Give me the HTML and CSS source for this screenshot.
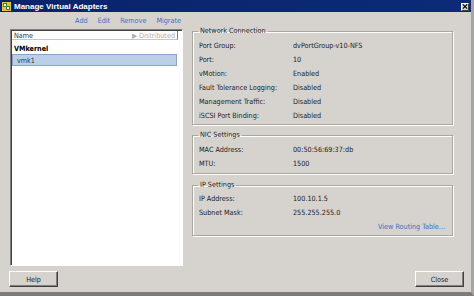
FILE: index.html
```html
<!DOCTYPE html>
<html>
<head>
<meta charset="utf-8">
<link rel="stylesheet" href="styles.css">
</head>
<body>
<div class="window">
  <div class="titlebar">
    <svg class="app-icon" width="9" height="9" viewBox="0 0 9 9">
      <rect x="0" y="0" width="9" height="9" fill="#e8c040"/>
      <rect x="1" y="1" width="4" height="4" fill="#3a8a3a"/>
      <rect x="4" y="4" width="4" height="4" fill="#3a8a3a"/>
      <rect x="2" y="2" width="2" height="2" fill="#fff"/>
      <rect x="5" y="5" width="2" height="2" fill="#fff"/>
    </svg>
    <span class="title">Manage Virtual Adapters</span>
    <span class="close-btn">
      <svg width="7" height="7" viewBox="0 0 7 7"><path d="M1 1 L6 6 M6 1 L1 6" stroke="#000" stroke-width="1.4"/></svg>
    </span>
  </div>
  <div class="main">
    <div class="left">
      <div class="toolbar">
        <a class="link">Add</a>
        <a class="link">Edit</a>
        <a class="link">Remove</a>
        <a class="link">Migrate</a>
      </div>
      <div class="listbox">
        <div class="list-header">
          <span class="col-name">Name</span>
          <span class="col-dist">&#9654; Distributed</span>
        </div>
        <div class="group-row">VMkernel</div>
        <div class="item-row selected">vmk1</div>
      </div>
    </div>
    <div class="right">
      <fieldset class="group g-net">
        <legend>Network Connection</legend>
        <div class="row"><span class="lbl">Port Group:</span><span class="val">dvPortGroup-v10-NFS</span></div>
        <div class="row"><span class="lbl">Port:</span><span class="val">10</span></div>
        <div class="row"><span class="lbl">vMotion:</span><span class="val">Enabled</span></div>
        <div class="row"><span class="lbl">Fault Tolerance Logging:</span><span class="val">Disabled</span></div>
        <div class="row"><span class="lbl">Management Traffic:</span><span class="val">Disabled</span></div>
        <div class="row"><span class="lbl">iSCSI Port Binding:</span><span class="val">Disabled</span></div>
      </fieldset>
      <fieldset class="group g-nic">
        <legend>NIC Settings</legend>
        <div class="row"><span class="lbl">MAC Address:</span><span class="val">00:50:56:69:37:db</span></div>
        <div class="row"><span class="lbl">MTU:</span><span class="val">1500</span></div>
      </fieldset>
      <fieldset class="group g-ip">
        <legend>IP Settings</legend>
        <div class="row"><span class="lbl">IP Address:</span><span class="val">100.10.1.5</span></div>
        <div class="row"><span class="lbl">Subnet Mask:</span><span class="val">255.255.255.0</span></div>
        <div class="row route"><a class="link">View Routing Table...</a></div>
      </fieldset>
    </div>
  </div>
  <div class="buttons">
    <button class="btn">Help</button>
    <button class="btn">Close</button>
  </div>
</div>
</body>
</html>
```

FILE: styles.css
```css
* { box-sizing: border-box; }
html, body {
  margin: 0;
  padding: 0;
  background: #d6d3ce;
}
body {
  font-family: "DejaVu Sans Condensed", "DejaVu Sans", sans-serif;
  font-stretch: condensed;
  font-size: 7.2px;
  color: #222;
}
.window {
  width: 474px;
  height: 296px;
  background: #d6d3ce;
  display: flex;
  flex-direction: column;
  border-right: 3px solid #a8a6a2;
  border-bottom: 4px solid #7c7b78;
  overflow: hidden;
}
.titlebar {
  height: 12px;
  background: linear-gradient(to right, #0a246a, #0c2a78);
  display: flex;
  align-items: center;
  padding: 0 0 0 2px;
  color: #fff;
}
.app-icon { flex: none; }
.title {
  font-family: "Liberation Sans", Arial, sans-serif;
  font-stretch: normal;
  font-weight: bold;
  font-size: 8px;
  margin-left: 3px;
  flex: 1;
}
.close-btn {
  width: 8px;
  height: 8px;
  background: #d6d3ce;
  border: 1px solid;
  border-color: #fff #404040 #404040 #fff;
  display: flex;
  align-items: center;
  justify-content: center;
  margin-right: 2px;
  margin-top: 1px;
}
.main {
  display: flex;
  flex: 1;
}
.left {
  margin-left: 10px;
  width: 173px;
  display: flex;
  flex-direction: column;
}
.toolbar {
  height: 17px;
  display: flex;
  justify-content: flex-end;
  align-items: center;
  gap: 10px;
  padding-right: 2px;
}
.link {
  color: #3b6fc4;
  text-decoration: none;
}
.listbox {
  height: 237px;
  background: #fff;
  border: 1px solid;
  border-color: #808080 #fff #fff #808080;
  box-shadow: inset 1px 1px 0 #404040;
  padding: 1px 1px 0 1px;
}
.list-header {
  height: 9px;
  display: flex;
  align-items: center;
  justify-content: space-between;
  border-bottom: 1px solid #c8c6c0;
  border-right: 1px solid #808080;
  padding: 0 2px 0 2px;
  margin-right: 3px;
  background: #fff;
  color: #333;
}
.col-dist { color: #b0aea8; }
.group-row {
  font-weight: bold;
  color: #000;
  height: 14px;
  display: flex;
  align-items: center;
  padding-left: 2px;
  padding-top: 2px;
}
.item-row {
  height: 12px;
  display: flex;
  align-items: center;
  padding-left: 4px;
  margin-right: 4px;
}
.item-row.selected {
  background: #bccfe8;
  border: 1px solid #8aa3c8;
  color: #333;
}
.right {
  margin-left: 9px;
  width: 261px;
  padding-top: 14px;
  display: flex;
  flex-direction: column;
  gap: 5px;
}
.group {
  margin: 0;
  border: 1px solid #a9a7a2;
  box-shadow: 1px 1px 0 #fff, inset 1px 1px 0 #fff;
  padding: 2px 6px 0 6px;
  min-width: 0;
}
.group legend {
  padding: 0 2px;
  margin-left: -1px;
  color: #222;
  line-height: 10px;
}
.row {
  height: 14px;
  display: flex;
  align-items: center;
}
.lbl { width: 94px; }
.g-net { height: 99px; }
.g-nic { height: 44px; }
.g-ip { height: 56px; margin-top: 1px; padding-top: 1px; }
.route { justify-content: flex-end; padding-right: 1px; }
.buttons {
  height: 24px;
  display: flex;
  justify-content: space-between;
  align-items: flex-start;
  padding: 3px 7px 0 9px;
}
.btn {
  width: 49px;
  height: 16px;
  font-family: "DejaVu Sans Condensed", "DejaVu Sans", sans-serif;
  font-stretch: condensed;
  font-size: 7.2px;
  color: #222;
  background: #d6d3ce;
  border: 1px solid;
  border-color: #fff #404040 #404040 #fff;
  box-shadow: inset -1px -1px 0 #808080;
  padding: 0;
}
```
